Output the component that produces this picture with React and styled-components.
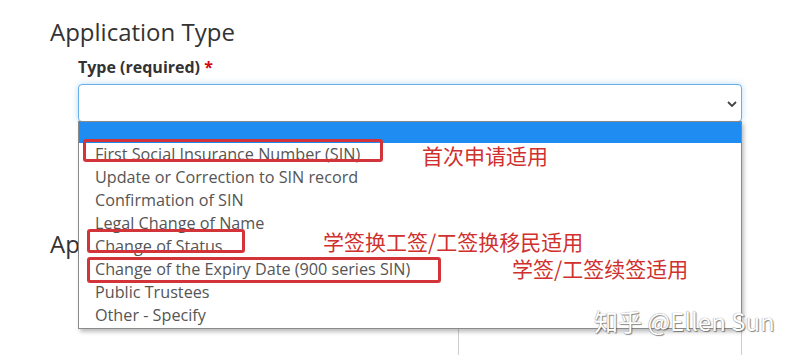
import React from 'react';
import styled, { createGlobalStyle } from 'styled-components';

const GlobalStyle = createGlobalStyle`
  html, body {
    margin: 0;
    padding: 0;
    background: #fff;
    font-family: "Open Sans", "Noto Sans", sans-serif;
    color: #333;
  }
`;

const OPTIONS = [
  'First Social Insurance Number (SIN)',
  'Update or Correction to SIN record',
  'Confirmation of SIN',
  'Legal Change of Name',
  'Change of Status',
  'Change of the Expiry Date (900 series SIN)',
  'Public Trustees',
  'Other - Specify',
];

const NOTES = [
  { text: '首次申请适用', left: 422, top: 142 },
  { text: '学签换工签/工签换移民适用', left: 323, top: 228 },
  { text: '学签/工签续签适用', left: 512, top: 255 },
];

const MARKS = [
  { left: 83, top: 139, width: 300, height: 23 },
  { left: 87, top: 229, width: 158, height: 24 },
  { left: 87, top: 257, width: 354, height: 26 },
];

const App = () => {
  return (
    <Page>
      <GlobalStyle />
      <Section>
        <Heading>Application Type</Heading>
        <Field>
          <Label>
            Type (required) <Required>*</Required>
          </Label>
          <SelectWrap>
            <Select>
              <Chevron viewBox="0 0 10 6" width="10" height="6">
                <path d="M1 1 L5 5 L9 1" fill="none" stroke="#444" strokeWidth="1.8" />
              </Chevron>
            </Select>
            <Listbox>
              <Option $active />
              {OPTIONS.map((o) => (
                <Option key={o}>{o}</Option>
              ))}
            </Listbox>
          </SelectWrap>
        </Field>
      </Section>

      <Section>
        <Heading>Applicant Information</Heading>
        <InputRow>
          <Input $width={302} $height={22} />
          <Input $width={284} $height={80} />
        </InputRow>
      </Section>

      {MARKS.map((m, i) => (
        <Mark key={i} style={{ left: m.left, top: m.top, width: m.width, height: m.height }} />
      ))}
      {NOTES.map((n) => (
        <Note key={n.text} style={{ left: n.left, top: n.top }}>
          {n.text}
        </Note>
      ))}
      <Watermark>知乎 @Ellen Sun</Watermark>
    </Page>
  );
};

export default App;

const Page = styled.div`
  position: relative;
  width: 795px;
  height: 355px;
  overflow: hidden;
  padding: 16px 0 0 50px;
  box-sizing: border-box;
`;

const Section = styled.section`
  display: flex;
  flex-direction: column;
  margin-bottom: 106px;
`;

const Heading = styled.h2`
  margin: 0;
  font-size: 24px;
  font-weight: 400;
  line-height: 32px;
  color: #333;
`;

const Field = styled.div`
  display: flex;
  flex-direction: column;
  margin-top: 8px;
  padding-left: 28px;
  gap: 6px;
`;

const Label = styled.label`
  font-size: 16px;
  font-weight: 700;
  line-height: 22px;
  color: #333;
`;

const Required = styled.span`
  color: #d3080c;
`;

const SelectWrap = styled.div`
  position: relative;
  width: 664px;
`;

const Select = styled.div`
  height: 38px;
  box-sizing: border-box;
  border: 1px solid #66afe9;
  border-radius: 4px;
  background: #fff;
  box-shadow: 0 0 6px rgba(102, 175, 233, 0.45);
  display: flex;
  align-items: center;
  justify-content: flex-end;
  padding-right: 4px;
`;

const Chevron = styled.svg`
  display: block;
  margin-top: 2px;
`;

const Listbox = styled.ul`
  position: absolute;
  z-index: 2;
  left: 0;
  top: 37px;
  width: 664px;
  box-sizing: border-box;
  margin: 0;
  padding: 0 0 1px;
  list-style: none;
  background: #fff;
  border: 1px solid #8a8a8a;
  box-shadow: 2px 3px 4px rgba(0, 0, 0, 0.25);
`;

const Option = styled.li`
  height: ${(p) => (p.$active ? '21px' : '23px')};
  line-height: 23px;
  padding-left: 16px;
  font-size: 16.2px;
  color: #555;
  background: ${(p) => (p.$active ? '#1e8cf0' : 'transparent')};
  white-space: nowrap;
`;

const InputRow = styled.div`
  display: flex;
  align-items: flex-start;
  gap: 78px;
  padding: 40px 0 0 28px;
`;

const Input = styled.div`
  width: ${(p) => p.$width}px;
  height: ${(p) => p.$height}px;
  box-sizing: border-box;
  border: 1px solid #ccc;
  border-radius: 4px;
`;

const Mark = styled.div`
  position: absolute;
  z-index: 3;
  box-sizing: border-box;
  border: 3px solid #d3343a;
  border-radius: 3px;
`;

const Note = styled.div`
  position: absolute;
  z-index: 3;
  font-family: "Noto Sans CJK SC", "Noto Sans", sans-serif;
  font-size: 21px;
  line-height: 26px;
  color: #d0302e;
  white-space: nowrap;
`;

const Watermark = styled.div`
  position: absolute;
  z-index: 4;
  left: 594px;
  top: 305px;
  font-family: "Noto Sans CJK SC", "Noto Sans", sans-serif;
  font-size: 24px;
  line-height: 32px;
  color: #fff;
  text-shadow: 0 0 1px #666, 1px 1px 1px rgba(0, 0, 0, 0.45);
  white-space: nowrap;
`;
